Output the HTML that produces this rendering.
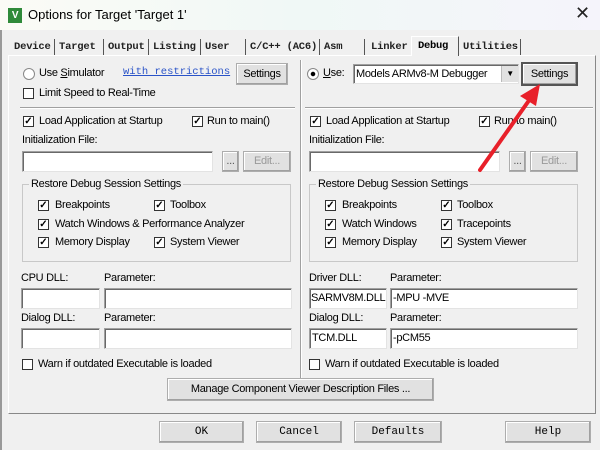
<!DOCTYPE html>
<html><head><style>
body{margin:0;width:600px;height:450px;overflow:hidden;background:#f0f0f0;font-family:"Liberation Sans",sans-serif;font-size:11px;letter-spacing:-0.3px;color:#000;position:relative}
.a{position:absolute;white-space:nowrap}
.btn{position:absolute;background:#e1e1e1;border:1px solid #adadad;box-shadow:inset -1px -1px #a0a0a0,inset 1px 1px #fff;text-align:center;box-sizing:border-box;white-space:nowrap}
.in{position:absolute;background:#fff;border:1px solid #a0a0a0;border-right-color:#e3e3e3;border-bottom-color:#e3e3e3;box-shadow:inset 1px 1px #696969;box-sizing:border-box;padding:3px 2px;font-size:11px;white-space:nowrap;overflow:hidden}
.cb{position:absolute;width:11px;height:11px;border:1px solid #333;background:#fff;box-sizing:border-box;font-size:10px;line-height:9px;text-align:center;font-weight:bold;letter-spacing:0}
.rb{position:absolute;width:12px;height:12px;border:1px solid #888;border-radius:50%;background:#fff;box-sizing:border-box}
.tab{position:absolute;top:39px;height:16px;font-family:"Liberation Mono",monospace;font-size:10.5px;letter-spacing:-0.2px;font-weight:bold;border-right:1px solid #555;padding-left:4px;line-height:16px;color:#222;white-space:nowrap;box-sizing:border-box}
.gb{position:absolute;border:1px solid #c8c8c8;box-sizing:border-box}
.mono{font-family:"Liberation Mono",monospace;font-size:11px;letter-spacing:0}
</style></head><body>
<div class="a" style="left:0;top:0;width:600px;height:30px;background:linear-gradient(90deg,#fbfbf6,#f0f8f6 50%,#f5f4fb)"></div>
<div class="a" style="left:8px;top:8px;width:14px;height:15px;background:#2f8a3a;color:#fff;font-size:10px;font-weight:bold;line-height:15px;text-align:center">V</div>
<div class="a" style="left:28px;top:7px;font-size:13px;letter-spacing:0">Options for Target 'Target 1'</div>
<div class="a" style="left:575px;top:3px;font-size:18px;color:#222">✕</div>
<div class="a" style="left:0;top:30px;width:2px;height:420px;background:#999"></div>

<div class="tab" style="left:10px;width:45px">Device</div>
<div class="tab" style="left:55px;width:49px">Target</div>
<div class="tab" style="left:104px;width:45px">Output</div>
<div class="tab" style="left:149px;width:52px">Listing</div>
<div class="tab" style="left:201px;width:45px">User</div>
<div class="tab" style="left:246px;width:74px">C/C++ (AC6)</div>
<div class="tab" style="left:320px;width:45px">Asm</div>
<div class="tab" style="left:367px;width:45px;border-right:none">Linker</div>
<div class="a" style="left:411px;top:36px;width:48px;height:20px;background:#f0f0f0;border:1px solid #fff;border-right:1px solid #555;border-bottom:none;font-family:'Liberation Mono',monospace;font-weight:bold;font-size:10.5px;padding-left:6px;line-height:18px;box-sizing:border-box;z-index:2">Debug</div>
<div class="tab" style="left:459px;width:62px">Utilities</div>
<div class="a" style="left:8px;top:55px;width:588px;height:359px;border:1px solid #fff;border-right-color:#888;border-bottom-color:#888;box-sizing:border-box"></div>

<div class="a" style="left:300px;top:60px;width:1px;height:325px;background:#a0a0a0;border-right:1px solid #fff"></div>

<div class="rb" style="left:23px;top:68px"></div>
<div class="a" style="left:39px;top:67px">Use <u>S</u>imulator</div>
<div class="a mono" style="left:123px;top:66px;color:#2a53c8;text-decoration:underline;font-size:10.5px">with restrictions</div>
<div class="btn" style="left:236px;top:63px;width:52px;height:22px;line-height:20px">Settings</div>
<div class="cb" style="left:23px;top:88px"></div>
<div class="a" style="left:39px;top:87px">Limit Speed to Real-Time</div>
<div class="a" style="left:20px;top:107px;width:275px;height:1px;background:#a0a0a0;border-bottom:1px solid #fff"></div>

<div class="rb" style="left:307px;top:68px;background:radial-gradient(circle,#000 2px,#fff 2.5px)"></div>
<div class="a" style="left:323px;top:67px"><u>U</u>se:</div>
<div class="in" style="left:353px;top:64px;width:166px;height:20px">Models ARMv8-M Debugger</div>
<div class="a" style="left:501px;top:66px;width:16px;height:16px;background:#e1e1e1;border-left:1px solid #bbb;font-size:8px;text-align:center;line-height:16px">▼</div>
<div class="btn" style="left:521px;top:62px;width:57px;height:24px;line-height:20px;border:2px solid #555">Settings</div>
<div class="a" style="left:305px;top:107px;width:288px;height:1px;background:#a0a0a0;border-bottom:1px solid #fff"></div>

<div class="cb" style="left:23px;top:116px">✓</div><div class="a" style="left:39px;top:115px">Load Application at Startup</div>
<div class="cb" style="left:192px;top:116px">✓</div><div class="a" style="left:207px;top:115px">Run to main()</div>
<div class="a" style="left:22px;top:134px">Initialization File:</div>
<div class="in" style="left:22px;top:151px;width:191px;height:21px"></div>
<div class="btn" style="left:222px;top:151px;width:17px;height:21px;line-height:19px;color:#555">...</div>
<div class="btn" style="left:243px;top:151px;width:48px;height:21px;line-height:19px;color:#999">Edit...</div>
<div class="gb" style="left:22px;top:184px;width:269px;height:78px"></div>
<div class="a" style="left:29px;top:178px;background:#f0f0f0;padding:0 2px">Restore Debug Session Settings</div>
<div class="cb" style="left:38px;top:200px">✓</div><div class="a" style="left:55px;top:199px">Breakpoints</div>
<div class="cb" style="left:154px;top:200px">✓</div><div class="a" style="left:170px;top:199px">Toolbox</div>
<div class="cb" style="left:38px;top:219px">✓</div><div class="a" style="left:55px;top:218px">Watch Windows &amp; Performance Analyzer</div>
<div class="cb" style="left:38px;top:237px">✓</div><div class="a" style="left:55px;top:236px">Memory Display</div>
<div class="cb" style="left:154px;top:237px">✓</div><div class="a" style="left:170px;top:236px">System Viewer</div>
<div class="a" style="left:21px;top:272px">CPU DLL:</div><div class="a" style="left:104px;top:272px">Parameter:</div>
<div class="in" style="left:21px;top:288px;width:79px;height:21px"></div>
<div class="in" style="left:104px;top:288px;width:188px;height:21px"></div>
<div class="a" style="left:21px;top:312px">Dialog DLL:</div><div class="a" style="left:104px;top:312px">Parameter:</div>
<div class="in" style="left:21px;top:328px;width:79px;height:21px"></div>
<div class="in" style="left:104px;top:328px;width:188px;height:21px"></div>
<div class="cb" style="left:22px;top:359px"></div><div class="a" style="left:38px;top:358px">Warn if outdated Executable is loaded</div>

<div class="cb" style="left:310px;top:116px">✓</div><div class="a" style="left:326px;top:115px">Load Application at Startup</div>
<div class="cb" style="left:479px;top:116px">✓</div><div class="a" style="left:494px;top:115px">Run to main()</div>
<div class="a" style="left:309px;top:134px">Initialization File:</div>
<div class="in" style="left:309px;top:151px;width:191px;height:21px"></div>
<div class="btn" style="left:509px;top:151px;width:17px;height:21px;line-height:19px;color:#555">...</div>
<div class="btn" style="left:530px;top:151px;width:48px;height:21px;line-height:19px;color:#999">Edit...</div>
<div class="gb" style="left:309px;top:184px;width:269px;height:78px"></div>
<div class="a" style="left:316px;top:178px;background:#f0f0f0;padding:0 2px">Restore Debug Session Settings</div>
<div class="cb" style="left:325px;top:200px">✓</div><div class="a" style="left:342px;top:199px">Breakpoints</div>
<div class="cb" style="left:441px;top:200px">✓</div><div class="a" style="left:457px;top:199px">Toolbox</div>
<div class="cb" style="left:325px;top:219px">✓</div><div class="a" style="left:342px;top:218px">Watch Windows</div>
<div class="cb" style="left:441px;top:219px">✓</div><div class="a" style="left:457px;top:218px">Tracepoints</div>
<div class="cb" style="left:325px;top:237px">✓</div><div class="a" style="left:342px;top:236px">Memory Display</div>
<div class="cb" style="left:441px;top:237px">✓</div><div class="a" style="left:457px;top:236px">System Viewer</div>
<div class="a" style="left:309px;top:272px">Driver DLL:</div><div class="a" style="left:390px;top:272px">Parameter:</div>
<div class="in" style="left:309px;top:288px;width:78px;height:21px;padding-left:1px">SARMV8M.DLL</div>
<div class="in" style="left:390px;top:288px;width:188px;height:21px">-MPU -MVE</div>
<div class="a" style="left:309px;top:312px">Dialog DLL:</div><div class="a" style="left:390px;top:312px">Parameter:</div>
<div class="in" style="left:309px;top:328px;width:78px;height:21px">TCM.DLL</div>
<div class="in" style="left:390px;top:328px;width:188px;height:21px">-pCM55</div>
<div class="cb" style="left:309px;top:359px"></div><div class="a" style="left:325px;top:358px">Warn if outdated Executable is loaded</div>

<div class="btn" style="left:167px;top:378px;width:267px;height:23px;line-height:21px">Manage Component Viewer Description Files ...</div>

<div class="btn mono" style="left:159px;top:421px;width:85px;height:22px;line-height:20px">OK</div>
<div class="btn mono" style="left:256px;top:421px;width:86px;height:22px;line-height:20px">Cancel</div>
<div class="btn mono" style="left:354px;top:421px;width:88px;height:22px;line-height:20px">Defaults</div>
<div class="btn mono" style="left:505px;top:421px;width:86px;height:22px;line-height:20px">Help</div>

<svg class="a" style="left:0;top:0;z-index:5" width="600" height="450">
<line x1="480" y1="170" x2="530" y2="99" stroke="#e8202a" stroke-width="4" stroke-linecap="round"/>
<polygon points="540,84 520,96 536,106" fill="#e8202a"/>
</svg>
</body></html>
